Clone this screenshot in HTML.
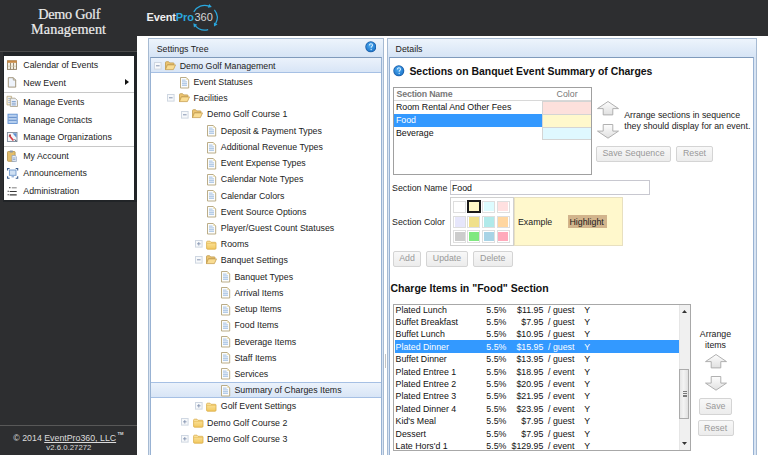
<!DOCTYPE html><html><head><meta charset="utf-8"><style>
*{margin:0;padding:0;box-sizing:border-box}
html,body{width:768px;height:455px;overflow:hidden;background:#fff;font-family:'Liberation Sans', sans-serif;}
.a{position:absolute}
.t{position:absolute;white-space:nowrap;line-height:1;font-size:8.8px;color:#222}
</style></head><body><div class="a" style="left:0;top:0;width:768px;height:36px;background:#2d2e30"></div>
<div class="a" style="left:0;top:0;width:137px;height:455px;background:#2d2e30"></div>
<div class="t" style="left:38.2px;top:7px;font-family:'Liberation Serif', serif;font-size:14.2px;color:#ececec;letter-spacing:-0.25px;-webkit-text-stroke:0.2px #ececec">Demo Golf</div>
<div class="t" style="left:31.1px;top:22px;font-family:'Liberation Serif', serif;font-size:14.2px;color:#ececec;letter-spacing:0.1px;-webkit-text-stroke:0.2px #ececec">Management</div>
<div class="a" style="left:0;top:51px;width:137px;height:1px;background:#4a4a4a"></div>
<div class="t" style="left:146.6px;top:12px;font-size:11px;font-weight:bold;color:#f0f0f0;letter-spacing:-0.15px">Event<span style="color:#2aa7dd">Pro</span></div>
<div class="t" style="left:194.6px;top:12px;font-size:11px;color:#d6d6d6;letter-spacing:-0.1px">360</div>
<svg class="a" style="left:0;top:0" width="230" height="36" viewBox="0 0 230 36"><g fill="none" stroke="#2aa7dd" stroke-width="1.25"><path d="M193.80 11.88A12.4 12.4 0 0 1 208.99 6.05"/><path d="M214.39 9.90A12.4 12.4 0 0 1 215.49 23.90"/><path d="M208.17 29.62A12.4 12.4 0 0 1 195.25 25.67"/></g><g fill="#2aa7dd"><path d="M211.81 7.07L209.24 3.90L207.80 7.85Z"/><path d="M213.99 26.50L217.56 24.52L213.92 22.42Z"/><path d="M193.32 23.37L193.96 27.40L197.18 24.70Z"/></g></svg>
<div class="a" style="left:2.5px;top:52px;width:134.5px;height:150.3px;background:#212427"></div>
<div class="a" style="left:4px;top:56px;width:130px;height:144px;background:#fff"></div>
<svg class="a" style="left:0;top:0" width="24" height="205" viewBox="0 0 24 205">
<!-- calendar -->
<rect x="7.5" y="60.8" width="9" height="8.6" fill="#f4efe2" stroke="#8f7f62" stroke-width="0.9"/>
<rect x="7.2" y="60.5" width="9.6" height="2.3" fill="#c98a45"/>
<path d="M10.5 63v6.4M13.5 63v6.4" stroke="#8f7f62" stroke-width="0.9"/>
<path d="M8 66.2h8" stroke="#cfc3a8" stroke-width="0.7"/>
<!-- new event -->
<path d="M8.3 77.7h5l2.4 2.4v7h-7.4z" fill="#eef3fb" stroke="#9a8c70" stroke-width="0.9"/>
<path d="M13.3 77.7v2.4h2.4" fill="none" stroke="#9a8c70" stroke-width="0.7"/>
<!-- manage events -->
<path d="M7 96.3h4.6v8.6H7z" fill="#f2eee2" stroke="#b9a77e" stroke-width="0.8"/>
<path d="M8.2 98.5h2.2M8.2 100.5h2.2M8.2 102.5h2.2" stroke="#9fb6d6" stroke-width="0.8"/>
<path d="M10.3 98.2h4.8l2.4 2.4v5.9h-7.2z" fill="#e9eef6" stroke="#a89f86" stroke-width="0.8"/>
<path d="M11.8 101.5h4M11.8 103.2h4M11.8 104.9h4" stroke="#7fa0cc" stroke-width="0.9"/>
<!-- manage contacts -->
<rect x="8" y="114.2" width="9.2" height="9.2" fill="#b8d0ef" stroke="#5f8fd0" stroke-width="0.9"/>
<path d="M8.5 117.4h8.2M8.5 120.3h8.2" stroke="#5a86c4" stroke-width="0.9"/>
<!-- manage organizations -->
<rect x="7.4" y="132.5" width="9.6" height="9" fill="#f4f6f8" stroke="#7d8a9a" stroke-width="0.9"/>
<path d="M12.5 133.2h4v4.5z" fill="#5d8fd0"/>
<path d="M9.2 135.5l4.2 5" stroke="#d4404a" stroke-width="1.8"/>
<circle cx="10" cy="135.3" r="1" fill="#a04040"/>
<path d="M14.5 139.5l2 1.5" stroke="#3a4a60" stroke-width="1"/>
<!-- my account -->
<rect x="7.5" y="151.5" width="7.6" height="9.8" rx="0.8" fill="#e2bd6a" stroke="#b08e48" stroke-width="0.8"/>
<path d="M9.8 150.5h3v2h-3z" fill="#8a96a6"/>
<path d="M12 155.5h3.2l1.2 1.2v4.8H12z" fill="#e6ecf5" stroke="#8fa2bd" stroke-width="0.7"/>
<path d="M12.8 158h2.6M12.8 159.6h2.6" stroke="#6f8fbf" stroke-width="0.7"/>
<!-- announcements -->
<path d="M7.6 170.5v-2h2M15.7 168.5h2v2M17.7 176.3v2h-2M9.6 178.3h-2v-2" fill="none" stroke="#3d5f8f" stroke-width="1.1"/>
<rect x="9.4" y="170" width="6.6" height="5.3" fill="#cfe0f3" stroke="#6f98cc" stroke-width="0.9"/>
<path d="M11.5 176.8h2.6" stroke="#6f98cc" stroke-width="1"/>
<!-- administration -->
<path d="M9.2 187.6h1.2M7.6 191.3h1.2M7.6 194.7h1.2" stroke="#333" stroke-width="1.1"/>
<path d="M11.8 187.8h4.9" stroke="#8a8a8a" stroke-width="1.1"/>
<path d="M9.7 191.5h7M9.7 194.9h7" stroke="#3a3a3a" stroke-width="1.1"/>
</svg>
<div class="t" style="left:23.30px;top:61px;">Calendar of Events</div>
<div class="t" style="left:23.30px;top:79px;">New Event</div>
<div class="t" style="left:23.30px;top:98px;">Manage Events</div>
<div class="t" style="left:23.30px;top:116px;">Manage Contacts</div>
<div class="t" style="left:23.30px;top:133px;">Manage Organizations</div>
<div class="t" style="left:23.30px;top:152px;">My Account</div>
<div class="t" style="left:23.30px;top:169px;">Announcements</div>
<div class="t" style="left:23.30px;top:187px;">Administration</div>
<svg class="a" style="left:125px;top:78.5px" width="4" height="6" viewBox="0 0 4 6"><path d="M0 0L4 3L0 6Z" fill="#111"/></svg>
<div class="a" style="left:4px;top:92px;width:130px;height:1px;background:#c8c8c8"></div>
<div class="a" style="left:4px;top:146px;width:130px;height:1px;background:#c8c8c8"></div>
<div class="a" style="left:0;top:425px;width:137px;height:1px;background:#585858"></div>
<div class="t" style="left:13.30px;top:434px;color:#dcdcdc;">&copy; 2014 <span style="text-decoration:underline">EventPro360, LLC</span></div>
<div class="t" style="left:117.6px;top:431.5px;font-size:4.2px;color:#dcdcdc;font-weight:bold;letter-spacing:-0.2px">TM</div>
<div class="t" style="left:46.30px;top:444px;font-size:7.8px;color:#dcdcdc;">v2.6.0.27272</div>
<div class="a" style="left:148px;top:38px;width:236px;height:430px;border:1px solid #a6bad2;background:#d8e4f3"></div><div class="a" style="left:149px;top:39px;width:234px;height:18px;background:linear-gradient(#edf4fc,#d6e4f5)"></div><div class="a" style="left:150px;top:57px;width:232px;height:420px;border:1px solid #98b2d3;border-top-color:#7f9abb;background:#fff"></div><div class="t" style="left:156.70px;top:45px;">Settings Tree</div>
<svg class="a" style="left:364.8px;top:41.2px" width="11.6" height="11.6" viewBox="0 0 12 12"><defs><radialGradient id="hg364" cx="0.45" cy="0.4" r="0.6"><stop offset="0" stop-color="#4eaaf0"/><stop offset="1" stop-color="#1f78cc"/></radialGradient></defs><circle cx="6" cy="6" r="5.7" fill="#1d5ea6"/><circle cx="6" cy="6" r="4.9" fill="url(#hg364)"/><path d="M4.4 4.7c0-1.05.75-1.75 1.7-1.75s1.7.65 1.7 1.55c0 1.15-1.4 1.2-1.4 2.45" fill="none" stroke="#d8f0ff" stroke-width="1.05"/><circle cx="6.4" cy="8.8" r="0.65" fill="#d8f0ff"/></svg>
<div class="a" style="left:151px;top:57.00px;width:230px;height:16px;background:linear-gradient(#ebf2fb,#d8e5f6);border-top:1px solid #7f9abb;border-bottom:1px solid #a6c0e4"></div>
<svg class="a" style="left:153.5px;top:61.9px" width="8" height="8" viewBox="0 0 8 8"><rect x="0.5" y="0.5" width="6.6" height="6.6" fill="#f7f9fb" stroke="#cfd7e2"/><path d="M2 3.8h3.6" stroke="#7a8aa8" stroke-width="0.9"/></svg>
<svg class="a" style="left:165.0px;top:60.8px" width="11" height="10" viewBox="0 0 11 10"><path d="M0.5 1.6q0-0.9 0.9-0.9h2.2l1.1 1.2h3.6q0.7 0 0.7 0.7v1.1H2.6L0.5 8.6z" fill="#ecc470" stroke="#bf9a4c" stroke-width="0.8"/><path d="M2.4 3.9h8.1L8.4 8.6H0.5z" fill="#f9dc92" stroke="#c8a050" stroke-width="0.8"/></svg>
<div class="t" style="left:179.70px;top:62px;">Demo Golf Management</div>
<svg class="a" style="left:179.9px;top:76.8px" width="10" height="12" viewBox="0 0 10 12"><path d="M0.5 0.5h5.8l2.4 2.4v8.1H0.5z" fill="#fcfdfd" stroke="#b3a47a" stroke-width="0.9"/><path d="M6.3 0.6v2.3h2.3z" fill="#eadcae"/><path d="M2 3.2h3.6M2 4.9h5M2 6.6h5M2 8.3h5" stroke="#b4cce8" stroke-width="1.3"/></svg>
<div class="t" style="left:193.40px;top:78px;">Event Statuses</div>
<svg class="a" style="left:167.2px;top:94.3px" width="8" height="8" viewBox="0 0 8 8"><rect x="0.5" y="0.5" width="6.6" height="6.6" fill="#f7f9fb" stroke="#cfd7e2"/><path d="M2 3.8h3.6" stroke="#7a8aa8" stroke-width="0.9"/></svg>
<svg class="a" style="left:178.7px;top:93.2px" width="11" height="10" viewBox="0 0 11 10"><path d="M0.5 1.6q0-0.9 0.9-0.9h2.2l1.1 1.2h3.6q0.7 0 0.7 0.7v1.1H2.6L0.5 8.6z" fill="#ecc470" stroke="#bf9a4c" stroke-width="0.8"/><path d="M2.4 3.9h8.1L8.4 8.6H0.5z" fill="#f9dc92" stroke="#c8a050" stroke-width="0.8"/></svg>
<div class="t" style="left:193.40px;top:94px;">Facilities</div>
<svg class="a" style="left:180.9px;top:110.5px" width="8" height="8" viewBox="0 0 8 8"><rect x="0.5" y="0.5" width="6.6" height="6.6" fill="#f7f9fb" stroke="#cfd7e2"/><path d="M2 3.8h3.6" stroke="#7a8aa8" stroke-width="0.9"/></svg>
<svg class="a" style="left:192.4px;top:109.4px" width="11" height="10" viewBox="0 0 11 10"><path d="M0.5 1.6q0-0.9 0.9-0.9h2.2l1.1 1.2h3.6q0.7 0 0.7 0.7v1.1H2.6L0.5 8.6z" fill="#ecc470" stroke="#bf9a4c" stroke-width="0.8"/><path d="M2.4 3.9h8.1L8.4 8.6H0.5z" fill="#f9dc92" stroke="#c8a050" stroke-width="0.8"/></svg>
<div class="t" style="left:207.10px;top:110px;">Demo Golf Course 1</div>
<svg class="a" style="left:207.3px;top:125.4px" width="10" height="12" viewBox="0 0 10 12"><path d="M0.5 0.5h5.8l2.4 2.4v8.1H0.5z" fill="#fcfdfd" stroke="#b3a47a" stroke-width="0.9"/><path d="M6.3 0.6v2.3h2.3z" fill="#eadcae"/><path d="M2 3.2h3.6M2 4.9h5M2 6.6h5M2 8.3h5" stroke="#b4cce8" stroke-width="1.3"/></svg>
<div class="t" style="left:220.80px;top:127px;">Deposit &amp; Payment Types</div>
<svg class="a" style="left:207.3px;top:141.6px" width="10" height="12" viewBox="0 0 10 12"><path d="M0.5 0.5h5.8l2.4 2.4v8.1H0.5z" fill="#fcfdfd" stroke="#b3a47a" stroke-width="0.9"/><path d="M6.3 0.6v2.3h2.3z" fill="#eadcae"/><path d="M2 3.2h3.6M2 4.9h5M2 6.6h5M2 8.3h5" stroke="#b4cce8" stroke-width="1.3"/></svg>
<div class="t" style="left:220.80px;top:143px;">Additional Revenue Types</div>
<svg class="a" style="left:207.3px;top:157.8px" width="10" height="12" viewBox="0 0 10 12"><path d="M0.5 0.5h5.8l2.4 2.4v8.1H0.5z" fill="#fcfdfd" stroke="#b3a47a" stroke-width="0.9"/><path d="M6.3 0.6v2.3h2.3z" fill="#eadcae"/><path d="M2 3.2h3.6M2 4.9h5M2 6.6h5M2 8.3h5" stroke="#b4cce8" stroke-width="1.3"/></svg>
<div class="t" style="left:220.80px;top:159px;">Event Expense Types</div>
<svg class="a" style="left:207.3px;top:174.0px" width="10" height="12" viewBox="0 0 10 12"><path d="M0.5 0.5h5.8l2.4 2.4v8.1H0.5z" fill="#fcfdfd" stroke="#b3a47a" stroke-width="0.9"/><path d="M6.3 0.6v2.3h2.3z" fill="#eadcae"/><path d="M2 3.2h3.6M2 4.9h5M2 6.6h5M2 8.3h5" stroke="#b4cce8" stroke-width="1.3"/></svg>
<div class="t" style="left:220.80px;top:175px;">Calendar Note Types</div>
<svg class="a" style="left:207.3px;top:190.2px" width="10" height="12" viewBox="0 0 10 12"><path d="M0.5 0.5h5.8l2.4 2.4v8.1H0.5z" fill="#fcfdfd" stroke="#b3a47a" stroke-width="0.9"/><path d="M6.3 0.6v2.3h2.3z" fill="#eadcae"/><path d="M2 3.2h3.6M2 4.9h5M2 6.6h5M2 8.3h5" stroke="#b4cce8" stroke-width="1.3"/></svg>
<div class="t" style="left:220.80px;top:192px;">Calendar Colors</div>
<svg class="a" style="left:207.3px;top:206.4px" width="10" height="12" viewBox="0 0 10 12"><path d="M0.5 0.5h5.8l2.4 2.4v8.1H0.5z" fill="#fcfdfd" stroke="#b3a47a" stroke-width="0.9"/><path d="M6.3 0.6v2.3h2.3z" fill="#eadcae"/><path d="M2 3.2h3.6M2 4.9h5M2 6.6h5M2 8.3h5" stroke="#b4cce8" stroke-width="1.3"/></svg>
<div class="t" style="left:220.80px;top:208px;">Event Source Options</div>
<svg class="a" style="left:207.3px;top:222.6px" width="10" height="12" viewBox="0 0 10 12"><path d="M0.5 0.5h5.8l2.4 2.4v8.1H0.5z" fill="#fcfdfd" stroke="#b3a47a" stroke-width="0.9"/><path d="M6.3 0.6v2.3h2.3z" fill="#eadcae"/><path d="M2 3.2h3.6M2 4.9h5M2 6.6h5M2 8.3h5" stroke="#b4cce8" stroke-width="1.3"/></svg>
<div class="t" style="left:220.80px;top:224px;">Player/Guest Count Statuses</div>
<svg class="a" style="left:194.6px;top:240.1px" width="8" height="8" viewBox="0 0 8 8"><rect x="0.5" y="0.5" width="6.6" height="6.6" fill="#f7f9fb" stroke="#cfd7e2"/><path d="M2 3.8h3.6M3.8 2v3.6" stroke="#7a8aa8" stroke-width="0.8"/></svg>
<svg class="a" style="left:206.4px;top:239.7px" width="11" height="10" viewBox="0 0 11 10"><defs><linearGradient id="fcg11" x1="0" y1="0" x2="0" y2="1"><stop offset="0" stop-color="#fce7a8"/><stop offset="1" stop-color="#f2c85e"/></linearGradient></defs><path d="M0.6 2.2q0-1 1-1h2.4l1 1.1h4.2q0.8 0 0.8 0.8v5.2q0 0.9-0.9 0.9H1.5q-0.9 0-0.9-0.9z" fill="url(#fcg11)" stroke="#d9ac48" stroke-width="0.8"/><path d="M0.8 3.4h9.2" stroke="#e6b850" stroke-width="0.6"/></svg>
<div class="t" style="left:220.80px;top:240px;">Rooms</div>
<svg class="a" style="left:194.6px;top:256.3px" width="8" height="8" viewBox="0 0 8 8"><rect x="0.5" y="0.5" width="6.6" height="6.6" fill="#f7f9fb" stroke="#cfd7e2"/><path d="M2 3.8h3.6" stroke="#7a8aa8" stroke-width="0.9"/></svg>
<svg class="a" style="left:206.1px;top:255.2px" width="11" height="10" viewBox="0 0 11 10"><path d="M0.5 1.6q0-0.9 0.9-0.9h2.2l1.1 1.2h3.6q0.7 0 0.7 0.7v1.1H2.6L0.5 8.6z" fill="#ecc470" stroke="#bf9a4c" stroke-width="0.8"/><path d="M2.4 3.9h8.1L8.4 8.6H0.5z" fill="#f9dc92" stroke="#c8a050" stroke-width="0.8"/></svg>
<div class="t" style="left:220.80px;top:256px;">Banquet Settings</div>
<svg class="a" style="left:221.0px;top:271.2px" width="10" height="12" viewBox="0 0 10 12"><path d="M0.5 0.5h5.8l2.4 2.4v8.1H0.5z" fill="#fcfdfd" stroke="#b3a47a" stroke-width="0.9"/><path d="M6.3 0.6v2.3h2.3z" fill="#eadcae"/><path d="M2 3.2h3.6M2 4.9h5M2 6.6h5M2 8.3h5" stroke="#b4cce8" stroke-width="1.3"/></svg>
<div class="t" style="left:234.50px;top:273px;">Banquet Types</div>
<svg class="a" style="left:221.0px;top:287.4px" width="10" height="12" viewBox="0 0 10 12"><path d="M0.5 0.5h5.8l2.4 2.4v8.1H0.5z" fill="#fcfdfd" stroke="#b3a47a" stroke-width="0.9"/><path d="M6.3 0.6v2.3h2.3z" fill="#eadcae"/><path d="M2 3.2h3.6M2 4.9h5M2 6.6h5M2 8.3h5" stroke="#b4cce8" stroke-width="1.3"/></svg>
<div class="t" style="left:234.50px;top:289px;">Arrival Items</div>
<svg class="a" style="left:221.0px;top:303.6px" width="10" height="12" viewBox="0 0 10 12"><path d="M0.5 0.5h5.8l2.4 2.4v8.1H0.5z" fill="#fcfdfd" stroke="#b3a47a" stroke-width="0.9"/><path d="M6.3 0.6v2.3h2.3z" fill="#eadcae"/><path d="M2 3.2h3.6M2 4.9h5M2 6.6h5M2 8.3h5" stroke="#b4cce8" stroke-width="1.3"/></svg>
<div class="t" style="left:234.50px;top:305px;">Setup Items</div>
<svg class="a" style="left:221.0px;top:319.8px" width="10" height="12" viewBox="0 0 10 12"><path d="M0.5 0.5h5.8l2.4 2.4v8.1H0.5z" fill="#fcfdfd" stroke="#b3a47a" stroke-width="0.9"/><path d="M6.3 0.6v2.3h2.3z" fill="#eadcae"/><path d="M2 3.2h3.6M2 4.9h5M2 6.6h5M2 8.3h5" stroke="#b4cce8" stroke-width="1.3"/></svg>
<div class="t" style="left:234.50px;top:321px;">Food Items</div>
<svg class="a" style="left:221.0px;top:336.0px" width="10" height="12" viewBox="0 0 10 12"><path d="M0.5 0.5h5.8l2.4 2.4v8.1H0.5z" fill="#fcfdfd" stroke="#b3a47a" stroke-width="0.9"/><path d="M6.3 0.6v2.3h2.3z" fill="#eadcae"/><path d="M2 3.2h3.6M2 4.9h5M2 6.6h5M2 8.3h5" stroke="#b4cce8" stroke-width="1.3"/></svg>
<div class="t" style="left:234.50px;top:338px;">Beverage Items</div>
<svg class="a" style="left:221.0px;top:352.2px" width="10" height="12" viewBox="0 0 10 12"><path d="M0.5 0.5h5.8l2.4 2.4v8.1H0.5z" fill="#fcfdfd" stroke="#b3a47a" stroke-width="0.9"/><path d="M6.3 0.6v2.3h2.3z" fill="#eadcae"/><path d="M2 3.2h3.6M2 4.9h5M2 6.6h5M2 8.3h5" stroke="#b4cce8" stroke-width="1.3"/></svg>
<div class="t" style="left:234.50px;top:354px;">Staff Items</div>
<svg class="a" style="left:221.0px;top:368.4px" width="10" height="12" viewBox="0 0 10 12"><path d="M0.5 0.5h5.8l2.4 2.4v8.1H0.5z" fill="#fcfdfd" stroke="#b3a47a" stroke-width="0.9"/><path d="M6.3 0.6v2.3h2.3z" fill="#eadcae"/><path d="M2 3.2h3.6M2 4.9h5M2 6.6h5M2 8.3h5" stroke="#b4cce8" stroke-width="1.3"/></svg>
<div class="t" style="left:234.50px;top:370px;">Services</div>
<div class="a" style="left:151px;top:382.00px;width:230px;height:16px;background:linear-gradient(#ebf2fb,#d8e5f6);border-top:1px solid #a6c0e4;border-bottom:1px solid #a6c0e4"></div>
<svg class="a" style="left:221.0px;top:384.6px" width="10" height="12" viewBox="0 0 10 12"><path d="M0.5 0.5h5.8l2.4 2.4v8.1H0.5z" fill="#fcfdfd" stroke="#b3a47a" stroke-width="0.9"/><path d="M6.3 0.6v2.3h2.3z" fill="#eadcae"/><path d="M2 3.2h3.6M2 4.9h5M2 6.6h5M2 8.3h5" stroke="#b4cce8" stroke-width="1.3"/></svg>
<div class="t" style="left:234.50px;top:386px;">Summary of Charges Items</div>
<svg class="a" style="left:194.6px;top:402.1px" width="8" height="8" viewBox="0 0 8 8"><rect x="0.5" y="0.5" width="6.6" height="6.6" fill="#f7f9fb" stroke="#cfd7e2"/><path d="M2 3.8h3.6M3.8 2v3.6" stroke="#7a8aa8" stroke-width="0.8"/></svg>
<svg class="a" style="left:206.4px;top:401.7px" width="11" height="10" viewBox="0 0 11 10"><defs><linearGradient id="fcg21" x1="0" y1="0" x2="0" y2="1"><stop offset="0" stop-color="#fce7a8"/><stop offset="1" stop-color="#f2c85e"/></linearGradient></defs><path d="M0.6 2.2q0-1 1-1h2.4l1 1.1h4.2q0.8 0 0.8 0.8v5.2q0 0.9-0.9 0.9H1.5q-0.9 0-0.9-0.9z" fill="url(#fcg21)" stroke="#d9ac48" stroke-width="0.8"/><path d="M0.8 3.4h9.2" stroke="#e6b850" stroke-width="0.6"/></svg>
<div class="t" style="left:220.80px;top:402px;">Golf Event Settings</div>
<svg class="a" style="left:180.9px;top:418.3px" width="8" height="8" viewBox="0 0 8 8"><rect x="0.5" y="0.5" width="6.6" height="6.6" fill="#f7f9fb" stroke="#cfd7e2"/><path d="M2 3.8h3.6M3.8 2v3.6" stroke="#7a8aa8" stroke-width="0.8"/></svg>
<svg class="a" style="left:192.7px;top:417.9px" width="11" height="10" viewBox="0 0 11 10"><defs><linearGradient id="fcg22" x1="0" y1="0" x2="0" y2="1"><stop offset="0" stop-color="#fce7a8"/><stop offset="1" stop-color="#f2c85e"/></linearGradient></defs><path d="M0.6 2.2q0-1 1-1h2.4l1 1.1h4.2q0.8 0 0.8 0.8v5.2q0 0.9-0.9 0.9H1.5q-0.9 0-0.9-0.9z" fill="url(#fcg22)" stroke="#d9ac48" stroke-width="0.8"/><path d="M0.8 3.4h9.2" stroke="#e6b850" stroke-width="0.6"/></svg>
<div class="t" style="left:207.10px;top:419px;">Demo Golf Course 2</div>
<svg class="a" style="left:180.9px;top:434.5px" width="8" height="8" viewBox="0 0 8 8"><rect x="0.5" y="0.5" width="6.6" height="6.6" fill="#f7f9fb" stroke="#cfd7e2"/><path d="M2 3.8h3.6M3.8 2v3.6" stroke="#7a8aa8" stroke-width="0.8"/></svg>
<svg class="a" style="left:192.7px;top:434.1px" width="11" height="10" viewBox="0 0 11 10"><defs><linearGradient id="fcg23" x1="0" y1="0" x2="0" y2="1"><stop offset="0" stop-color="#fce7a8"/><stop offset="1" stop-color="#f2c85e"/></linearGradient></defs><path d="M0.6 2.2q0-1 1-1h2.4l1 1.1h4.2q0.8 0 0.8 0.8v5.2q0 0.9-0.9 0.9H1.5q-0.9 0-0.9-0.9z" fill="url(#fcg23)" stroke="#d9ac48" stroke-width="0.8"/><path d="M0.8 3.4h9.2" stroke="#e6b850" stroke-width="0.6"/></svg>
<div class="t" style="left:207.10px;top:435px;">Demo Golf Course 3</div>
<div class="a" style="left:385px;top:353.7px;width:1px;height:14.6px;background:#c4c4c4"></div>
<div class="a" style="left:387px;top:38px;width:370px;height:430px;border:1px solid #a6bad2;background:#d8e4f3"></div><div class="a" style="left:388px;top:39px;width:368px;height:18px;background:linear-gradient(#edf4fc,#d6e4f5)"></div><div class="a" style="left:389px;top:57px;width:365px;height:420px;border:1px solid #98b2d3;border-top-color:#7f9abb;background:#fff"></div><div class="t" style="left:395.60px;top:45px;">Details</div>
<svg class="a" style="left:393.2px;top:65.2px" width="11.6" height="11.6" viewBox="0 0 12 12"><defs><radialGradient id="hg393" cx="0.45" cy="0.4" r="0.6"><stop offset="0" stop-color="#4eaaf0"/><stop offset="1" stop-color="#1f78cc"/></radialGradient></defs><circle cx="6" cy="6" r="5.7" fill="#1d5ea6"/><circle cx="6" cy="6" r="4.9" fill="url(#hg393)"/><path d="M4.4 4.7c0-1.05.75-1.75 1.7-1.75s1.7.65 1.7 1.55c0 1.15-1.4 1.2-1.4 2.45" fill="none" stroke="#d8f0ff" stroke-width="1.05"/><circle cx="6.4" cy="8.8" r="0.65" fill="#d8f0ff"/></svg>
<div class="t" style="left:409.40px;top:67px;font-size:10.45px;font-weight:bold;color:#111;">Sections on Banquet Event Summary of Charges</div>
<div class="a" style="left:393px;top:87px;width:198.6px;height:88px;border:1px solid #a0a0a0;background:#fff"></div>
<div class="t" style="left:396.60px;top:90px;font-weight:bold;color:#787878;letter-spacing:-0.2px">Section Name</div>
<div class="t" style="left:556.60px;top:90px;color:#777;">Color</div>
<div class="a" style="left:394px;top:100px;width:197px;height:1px;background:#d8d8d8"></div>
<div class="a" style="left:542px;top:100.50px;width:48.5px;height:13.15px;background:#fde0dc;border-left:1px solid #d4d4d4;border-top:1px solid #d4d4d4;"></div>
<div class="t" style="left:395.90px;top:103px;color:#111;">Room Rental And Other Fees</div>
<div class="a" style="left:394px;top:114.2px;width:148px;height:12.6px;background:#3399ff"></div>
<div class="a" style="left:542px;top:113.65px;width:48.5px;height:13.15px;background:#fff8cc;border-left:1px solid #d4d4d4;border-top:1px solid #d4d4d4;"></div>
<div class="t" style="left:395.90px;top:116px;color:#fff;">Food</div>
<div class="a" style="left:542px;top:126.80px;width:48.5px;height:13.65px;background:#dff8ff;border-left:1px solid #d4d4d4;border-top:1px solid #d4d4d4;border-bottom:1px solid #d4d4d4"></div>
<div class="t" style="left:395.90px;top:129px;color:#111;">Beverage</div>
<svg width="0" height="0" style="position:absolute"><defs><linearGradient id="ga" x1="0" y1="0" x2="0" y2="1"><stop offset="0" stop-color="#fdfdfd"/><stop offset="1" stop-color="#e0e0e0"/></linearGradient></defs></svg>
<svg class="a" style="left:597px;top:100.5px" width="22" height="15" viewBox="0 0 22 15"><path d="M11 0.5L21.5 7.6H15.8V13.9H6.2V7.6H0.5Z" fill="url(#ga)" stroke="#a8a8a8" stroke-width="0.9"/></svg>
<svg class="a" style="left:597px;top:123.5px" width="22" height="15" viewBox="0 0 22 15"><path d="M11 14.2L21.5 7.1H15.8V0.5H6.2V7.1H0.5Z" fill="url(#ga)" stroke="#a8a8a8" stroke-width="0.9"/></svg>
<div class="t" style="left:624.20px;top:111px;">Arrange sections in sequence</div>
<div class="t" style="left:624.20px;top:122px;">they should display for an event.</div>
<div class="a" style="left:596px;top:145.5px;width:75px;height:16.2px;border:1px solid #d4d4d4;border-radius:2px;background:linear-gradient(#f8f8f8,#ececec)"></div><div class="t" style="left:596px;width:75px;text-align:center;top:149px;color:#999">Save Sequence</div>
<div class="a" style="left:676px;top:145.5px;width:37px;height:16.2px;border:1px solid #d4d4d4;border-radius:2px;background:linear-gradient(#f8f8f8,#ececec)"></div><div class="t" style="left:676px;width:37px;text-align:center;top:149px;color:#999">Reset</div>
<div class="t" style="left:392.10px;top:184px;">Section Name</div>
<div class="a" style="left:449.5px;top:180.3px;width:200.5px;height:14.6px;border:1px solid #c8c8d0;background:#fff"></div>
<div class="t" style="left:451.90px;top:184px;color:#111;">Food</div>
<div class="t" style="left:392.10px;top:218px;">Section Color</div>
<div class="a" style="left:449.5px;top:197px;width:64.5px;height:49px;border:1px solid #d0d0d0;background:#fff"></div>
<div class="a" style="left:453.1px;top:200.7px;width:13px;height:12.3px;border:1px solid #dedede;padding:0.5px;background:#ffffff;background-clip:content-box"></div>
<div class="a" style="left:467.4px;top:200.7px;width:13px;height:12.3px;border:1px solid #dedede;padding:0.5px;background:#fff8c6;background-clip:content-box"></div>
<div class="a" style="left:482.4px;top:200.7px;width:13px;height:12.3px;border:1px solid #dedede;padding:0.5px;background:#ddfcff;background-clip:content-box"></div>
<div class="a" style="left:496.7px;top:200.7px;width:13px;height:12.3px;border:1px solid #dedede;padding:0.5px;background:#ffe0e0;background-clip:content-box"></div>
<div class="a" style="left:453.1px;top:215.8px;width:13px;height:12.3px;border:1px solid #dedede;padding:0.5px;background:#e6e6fb;background-clip:content-box"></div>
<div class="a" style="left:467.4px;top:215.8px;width:13px;height:12.3px;border:1px solid #dedede;padding:0.5px;background:#f0e08a;background-clip:content-box"></div>
<div class="a" style="left:482.4px;top:215.8px;width:13px;height:12.3px;border:1px solid #dedede;padding:0.5px;background:#b0eaea;background-clip:content-box"></div>
<div class="a" style="left:496.7px;top:215.8px;width:13px;height:12.3px;border:1px solid #dedede;padding:0.5px;background:#ffd6a0;background-clip:content-box"></div>
<div class="a" style="left:453.1px;top:230.4px;width:13px;height:12.3px;border:1px solid #dedede;padding:0.5px;background:#cccccc;background-clip:content-box"></div>
<div class="a" style="left:467.4px;top:230.4px;width:13px;height:12.3px;border:1px solid #dedede;padding:0.5px;background:#80e880;background-clip:content-box"></div>
<div class="a" style="left:482.4px;top:230.4px;width:13px;height:12.3px;border:1px solid #dedede;padding:0.5px;background:#a8d4e6;background-clip:content-box"></div>
<div class="a" style="left:496.7px;top:230.4px;width:13px;height:12.3px;border:1px solid #dedede;padding:0.5px;background:#ffaabb;background-clip:content-box"></div>
<div class="a" style="left:467.2px;top:200.2px;width:14px;height:13.3px;border:2px solid #1a1a1a"></div>
<div class="a" style="left:513.5px;top:196.5px;width:109.5px;height:49.5px;border:1px solid #e8e0c0;background:#fff8cc"></div>
<div class="t" style="left:518.00px;top:218px;">Example</div>
<div class="a" style="left:568px;top:215.2px;width:39px;height:12.7px;background:#d2b48c"></div>
<div class="t" style="left:569.50px;top:218px;">Highlight</div>
<div class="a" style="left:393px;top:250.5px;width:28px;height:16.2px;border:1px solid #d4d4d4;border-radius:2px;background:linear-gradient(#f8f8f8,#ececec)"></div><div class="t" style="left:393px;width:28px;text-align:center;top:254px;color:#999">Add</div>
<div class="a" style="left:426px;top:250.5px;width:42px;height:16.2px;border:1px solid #d4d4d4;border-radius:2px;background:linear-gradient(#f8f8f8,#ececec)"></div><div class="t" style="left:426px;width:42px;text-align:center;top:254px;color:#999">Update</div>
<div class="a" style="left:473px;top:250.5px;width:39.5px;height:16.2px;border:1px solid #d4d4d4;border-radius:2px;background:linear-gradient(#f8f8f8,#ececec)"></div><div class="t" style="left:473px;width:39.5px;text-align:center;top:254px;color:#999">Delete</div>
<div class="t" style="left:390.50px;top:283px;font-size:10.5px;font-weight:bold;color:#111;">Charge Items in "Food" Section</div>
<div class="a" style="left:393px;top:304px;width:298px;height:147px;border:1px solid #a8a8a8;background:#fff"></div>
<div class="a" style="left:394.5px;top:305px;width:296px;height:145px;overflow:hidden"><div class="t" style="left:1.10px;top:1px;color:#111;">Plated Lunch</div><div class="t" style="left:91.80px;top:1px;color:#111;">5.5%</div><div class="t" style="left:88.80px;width:60px;text-align:right;top:1px;color:#111;">$11.95</div><div class="t" style="left:153.50px;top:1px;color:#111;">/ guest</div><div class="t" style="left:189.70px;top:1px;color:#111;">Y</div><div class="t" style="left:1.10px;top:13px;color:#111;">Buffet Breakfast</div><div class="t" style="left:91.80px;top:13px;color:#111;">5.5%</div><div class="t" style="left:88.80px;width:60px;text-align:right;top:13px;color:#111;">$7.95</div><div class="t" style="left:153.50px;top:13px;color:#111;">/ guest</div><div class="t" style="left:189.70px;top:13px;color:#111;">Y</div><div class="t" style="left:1.10px;top:25px;color:#111;">Buffet Lunch</div><div class="t" style="left:91.80px;top:25px;color:#111;">5.5%</div><div class="t" style="left:88.80px;width:60px;text-align:right;top:25px;color:#111;">$10.95</div><div class="t" style="left:153.50px;top:25px;color:#111;">/ guest</div><div class="t" style="left:189.70px;top:25px;color:#111;">Y</div><div class="a" style="left:0;top:35.40px;width:284.5px;height:12.5px;background:#3399ff"></div><div class="t" style="left:1.10px;top:38px;color:#fff;">Plated Dinner</div><div class="t" style="left:91.80px;top:38px;color:#fff;">5.5%</div><div class="t" style="left:88.80px;width:60px;text-align:right;top:38px;color:#fff;">$15.95</div><div class="t" style="left:153.50px;top:38px;color:#fff;">/ guest</div><div class="t" style="left:189.70px;top:38px;color:#fff;">Y</div><div class="t" style="left:1.10px;top:50px;color:#111;">Buffet Dinner</div><div class="t" style="left:91.80px;top:50px;color:#111;">5.5%</div><div class="t" style="left:88.80px;width:60px;text-align:right;top:50px;color:#111;">$13.95</div><div class="t" style="left:153.50px;top:50px;color:#111;">/ guest</div><div class="t" style="left:189.70px;top:50px;color:#111;">Y</div><div class="t" style="left:1.10px;top:63px;color:#111;">Plated Entree 1</div><div class="t" style="left:91.80px;top:63px;color:#111;">5.5%</div><div class="t" style="left:88.80px;width:60px;text-align:right;top:63px;color:#111;">$18.95</div><div class="t" style="left:153.50px;top:63px;color:#111;">/ event</div><div class="t" style="left:189.70px;top:63px;color:#111;">Y</div><div class="t" style="left:1.10px;top:75px;color:#111;">Plated Entree 2</div><div class="t" style="left:91.80px;top:75px;color:#111;">5.5%</div><div class="t" style="left:88.80px;width:60px;text-align:right;top:75px;color:#111;">$20.95</div><div class="t" style="left:153.50px;top:75px;color:#111;">/ event</div><div class="t" style="left:189.70px;top:75px;color:#111;">Y</div><div class="t" style="left:1.10px;top:87px;color:#111;">Plated Entree 3</div><div class="t" style="left:91.80px;top:87px;color:#111;">5.5%</div><div class="t" style="left:88.80px;width:60px;text-align:right;top:87px;color:#111;">$21.95</div><div class="t" style="left:153.50px;top:87px;color:#111;">/ event</div><div class="t" style="left:189.70px;top:87px;color:#111;">Y</div><div class="t" style="left:1.10px;top:100px;color:#111;">Plated Dinner 4</div><div class="t" style="left:91.80px;top:100px;color:#111;">5.5%</div><div class="t" style="left:88.80px;width:60px;text-align:right;top:100px;color:#111;">$23.95</div><div class="t" style="left:153.50px;top:100px;color:#111;">/ event</div><div class="t" style="left:189.70px;top:100px;color:#111;">Y</div><div class="t" style="left:1.10px;top:112px;color:#111;">Kid's Meal</div><div class="t" style="left:91.80px;top:112px;color:#111;">5.5%</div><div class="t" style="left:88.80px;width:60px;text-align:right;top:112px;color:#111;">$7.95</div><div class="t" style="left:153.50px;top:112px;color:#111;">/ guest</div><div class="t" style="left:189.70px;top:112px;color:#111;">Y</div><div class="t" style="left:1.10px;top:125px;color:#111;">Dessert</div><div class="t" style="left:91.80px;top:125px;color:#111;">5.5%</div><div class="t" style="left:88.80px;width:60px;text-align:right;top:125px;color:#111;">$7.95</div><div class="t" style="left:153.50px;top:125px;color:#111;">/ guest</div><div class="t" style="left:189.70px;top:125px;color:#111;">Y</div><div class="t" style="left:1.10px;top:137px;color:#111;">Late Hors'd 1</div><div class="t" style="left:91.80px;top:137px;color:#111;">5.5%</div><div class="t" style="left:88.80px;width:60px;text-align:right;top:137px;color:#111;">$129.95</div><div class="t" style="left:153.50px;top:137px;color:#111;">/ event</div><div class="t" style="left:189.70px;top:137px;color:#111;">Y</div></div>
<div class="a" style="left:679px;top:305px;width:11px;height:145px;background:#f0f0f0;border-left:1px solid #e6e6e6"></div>
<svg class="a" style="left:682px;top:310px" width="5" height="3" viewBox="0 0 5 3"><path d="M0 3L2.5 0L5 3Z" fill="#333"/></svg>
<svg class="a" style="left:682px;top:442px" width="5" height="3" viewBox="0 0 5 3"><path d="M0 0L2.5 3L5 0Z" fill="#333"/></svg>
<div class="a" style="left:679px;top:369.2px;width:10px;height:50px;background:linear-gradient(90deg,#e6e6e6,#f3f3f3 45%,#e0e0e0);border:1px solid #ababab"></div>
<div class="a" style="left:682.5px;top:391px;width:4px;height:1px;background:#7a7a7a"></div>
<div class="a" style="left:682.5px;top:392.8px;width:4px;height:1px;background:#7a7a7a"></div>
<div class="a" style="left:682.5px;top:394.6px;width:4px;height:1px;background:#7a7a7a"></div>
<div class="a" style="left:682.5px;top:396.4px;width:4px;height:1px;background:#7a7a7a"></div>
<div class="t" style="left:695px;width:41px;text-align:center;top:330px">Arrange</div>
<div class="t" style="left:695px;width:41px;text-align:center;top:341px">items</div>
<svg class="a" style="left:704.8px;top:353.6px" width="22" height="15" viewBox="0 0 22 15"><path d="M11 0.5L21.5 7.6H15.8V13.9H6.2V7.6H0.5Z" fill="url(#ga)" stroke="#a8a8a8" stroke-width="0.9"/></svg>
<svg class="a" style="left:704.8px;top:375.6px" width="22" height="15" viewBox="0 0 22 15"><path d="M11 14.2L21.5 7.1H15.8V0.5H6.2V7.1H0.5Z" fill="url(#ga)" stroke="#a8a8a8" stroke-width="0.9"/></svg>
<div class="a" style="left:699.4px;top:398px;width:32.2px;height:16.5px;border:1px solid #d4d4d4;border-radius:2px;background:linear-gradient(#f8f8f8,#ececec)"></div><div class="t" style="left:699.4px;width:32.2px;text-align:center;top:402px;color:#999">Save</div>
<div class="a" style="left:697.6px;top:419.5px;width:36px;height:16px;border:1px solid #d4d4d4;border-radius:2px;background:linear-gradient(#f8f8f8,#ececec)"></div><div class="t" style="left:697.6px;width:36px;text-align:center;top:424px;color:#999">Reset</div></body></html>
